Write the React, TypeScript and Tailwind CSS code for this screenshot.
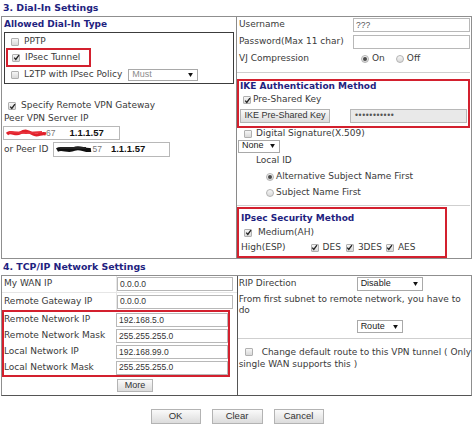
import React from "react";

const F = "font-['DejaVu_Sans',sans-serif]";
const A = "font-['Liberation_Sans',Arial,sans-serif]";

function Cb({ on }: { on?: boolean }) {
  return (
    <span className="inline-flex shrink-0 items-center justify-center w-[8px] h-[8px] border border-[#b0b0b0] rounded-[1px] bg-gradient-to-b from-[#f6f6f6] to-[#d9d9d9] overflow-visible">
      {on && (
        <svg viewBox="0 0 8 8" className="w-[7px] h-[7px] overflow-visible">
          <path d="M1.4 4.2 L3.2 6.2 L6.8 1.2" fill="none" stroke="#222" strokeWidth="1.5" />
        </svg>
      )}
    </span>
  );
}

function Radio({ on }: { on?: boolean }) {
  return (
    <span className="inline-flex shrink-0 items-center justify-center w-[8px] h-[8px] rounded-full border border-[#b3b3b3] bg-gradient-to-b from-[#f6f6f6] to-[#d9d9d9]">
      {on && <span className="w-[4px] h-[4px] rounded-full bg-[#4a4a4a]" />}
    </span>
  );
}

function Sel({ text, gray, cls }: { text: string; gray?: boolean; cls: string }) {
  return (
    <div className={`flex items-center justify-between border border-[#a9a9a9] bg-white pl-[3px] pr-[4px] ${A} text-[9px] ${cls}`}>
      <span className={gray ? "text-[#8c8c8c]" : "text-[#222]"}>{text}</span>
      <svg viewBox="0 0 6 5" className="w-[5px] h-[4px]">
        <path d="M0 0 H6 L3 5Z" fill="#111" />
      </svg>
    </div>
  );
}

function Inp({ cls, children }: { cls: string; children?: React.ReactNode }) {
  return (
    <div className={`flex items-center border border-[#b8b8b8] pl-[2px] ${A} text-[8.5px] text-[#333] whitespace-nowrap overflow-hidden ${cls}`}>
      {children}
    </div>
  );
}

function Btn({ cls, children }: { cls: string; children: React.ReactNode }) {
  return (
    <div className={`flex items-center justify-center border border-[#b3b3b3] bg-gradient-to-b from-[#fafafa] to-[#dcdcdc] ${A} text-[#333] ${cls}`}>
      {children}
    </div>
  );
}

const navy = "text-[#1f2380]";

export default function App() {
  return (
    <div className={`w-[474px] h-[428px] bg-white overflow-hidden ${F} text-[9px] text-[#3a3a3a]`}>
      {/* Section 3 header */}
      <div className={`h-[16px] pl-[3px] flex items-center font-bold text-[9.4px] ${navy}`}>3. Dial-In Settings</div>

      {/* Table 1 */}
      <div className="ml-[1px] w-[471px] h-[243px] border border-[#8f8f8f] flex">
        {/* Left column */}
        <div className="w-[234px] flex flex-col">
          <div className={`mt-[2px] h-[11px] pl-[2px] flex items-center font-bold ${navy}`}>Allowed Dial-In Type</div>
          <div className="mt-[2px] ml-[2px] w-[230px] h-[52px] border border-[#3c3c3c] pt-[3px] flex flex-col">
            <div className="h-[12px] pl-[6px] flex items-center gap-[5px]">
              <Cb />
              <span>PPTP</span>
            </div>
            <div className="ml-[1px] w-[85px] h-[19px] border-2 border-[#d3202e] pl-[4px] flex items-center gap-[5px]">
              <Cb on />
              <span>IPsec Tunnel</span>
            </div>
            <div className="h-[15px] pl-[6px] flex items-center gap-[5px]">
              <Cb />
              <span>L2TP with IPsec Policy</span>
              <Sel text="Must" gray cls="ml-[1px] w-[70px] h-[12px]" />
            </div>
          </div>
          <div className="mt-[15px] h-[14px] pl-[6px] flex items-center gap-[5px]">
            <Cb on />
            <span>Specify Remote VPN Gateway</span>
          </div>
          <div className="h-[12px] pl-[2px] flex items-center">Peer VPN Server IP</div>
          <Inp cls="mt-[1px] ml-[1px] w-[117px] h-[14px]">
            <svg viewBox="0 0 40 10" className="w-[40px] h-[10px]">
              <path d="M1 6 C5 2, 9 8, 14 5 S 22 3, 27 6 S 35 4, 40 6" fill="none" stroke="#e0202a" strokeWidth="3.2" />
              <path d="M3 4 L20 5 L36 4" fill="none" stroke="#e8303a" strokeWidth="2" />
            </svg>
            <span className="text-[#777]">67</span>
            <span className="ml-[14px] font-bold text-[9.5px] text-[#111]">1.1.1.57</span>
          </Inp>
          <div className="mt-[2px] h-[15px] pl-[2px] flex items-center gap-[5px]">
            <span>or Peer ID</span>
            <Inp cls="w-[117px] h-[15px]">
              <svg viewBox="0 0 36 10" className="w-[36px] h-[10px]">
                <path d="M1 5 C6 2, 12 7, 18 4 S 28 6, 35 5" fill="none" stroke="#111" strokeWidth="4" />
                <path d="M4 3 L30 3" fill="none" stroke="#222" strokeWidth="2" />
              </svg>
              <span className="text-[#777]">57</span>
              <span className="ml-[9px] font-bold text-[9.5px] text-[#111]">1.1.1.57</span>
            </Inp>
          </div>
        </div>

        {/* Right column */}
        <div className="w-[234px] border-l border-[#8a8a8a] flex flex-col">
          <div className="h-[16px] flex items-center">
            <span className="w-[116px] pl-[2px]">Username</span>
            <Inp cls="w-[117px] h-[14px] text-[#555]">???</Inp>
          </div>
          <div className="h-[17px] flex items-center">
            <span className="w-[116px] pl-[2px]">Password(Max 11 char)</span>
            <Inp cls="w-[117px] h-[14px]" />
          </div>
          <div className="h-[17px] flex items-center">
            <span className="w-[116px] pl-[2px]">VJ Compression</span>
            <div className="pl-[8px] flex items-center gap-[3px]">
              <Radio on />
              <span>On</span>
              <span className="ml-[5px]" />
              <Radio />
              <span>Off</span>
            </div>
          </div>
          <div className="mt-[5px] h-px bg-[#cfcfcf]" />
          <div className="mt-[6px] h-[49px] border-2 border-[#d3202e] flex flex-col">
            <div className={`h-[11px] pl-[1px] flex items-center font-bold ${navy}`}>IKE Authentication Method</div>
            <div className="h-[16px] pl-[4px] flex items-center gap-[2px]">
              <Cb on />
              <span>Pre-Shared Key</span>
            </div>
            <div className="h-[15px] flex items-center">
              <Btn cls="ml-[1px] w-[90px] h-[14px] text-[9px]">IKE Pre-Shared Key</Btn>
              <Inp cls="ml-auto mr-[1px] w-[117px] h-[14px] bg-[#e9e9e9] text-[4px] text-[#555] tracking-[0.6px] pl-[4px]">•••••••••••</Inp>
            </div>
          </div>
          <div className="h-[11px] pl-[7px] flex items-center gap-[4px]">
            <Cb />
            <span>Digital Signature(X.509)</span>
          </div>
          <div className="h-[14px] pl-[1px] flex items-center">
            <Sel text="None" cls="w-[42px] h-[13px]" />
          </div>
          <div className="h-[16px] pl-[19px] flex items-center">Local ID</div>
          <div className="h-[16px] pl-[29px] flex items-center gap-[2px]">
            <Radio on />
            <span>Alternative Subject Name First</span>
          </div>
          <div className="h-[16px] pl-[29px] flex items-center gap-[2px]">
            <Radio />
            <span>Subject Name First</span>
          </div>
          <div className="mt-[4px] h-px bg-[#cfcfcf]" />
          <div className="mt-[1px] w-[210px] h-[51px] border-2 border-[#d3202e] pt-[4px] flex flex-col">
            <div className={`h-[11px] pl-[2px] flex items-center font-bold ${navy}`}>IPsec Security Method</div>
            <div className="h-[17px] pl-[5px] flex items-center gap-[6px]">
              <Cb on />
              <span>Medium(AH)</span>
            </div>
            <div className="h-[13px] pl-[2px] flex items-center">
              <span>High(ESP)</span>
              <span className="ml-[25px]" />
              <Cb on />
              <span className="ml-[4px]">DES</span>
              <span className="ml-[5px]" />
              <Cb on />
              <span className="ml-[4px]">3DES</span>
              <span className="ml-[4px]" />
              <Cb on />
              <span className="ml-[4px]">AES</span>
            </div>
          </div>
        </div>
      </div>

      {/* Section 4 header */}
      <div className={`h-[16px] pl-[3px] flex items-center font-bold text-[9.4px] ${navy}`}>4. TCP/IP Network Settings</div>

      {/* Table 2 */}
      <div className="ml-[1px] w-[471px] h-[121px] border border-[#8f8f8f] border-b-[#555] flex">
        <div className="w-[235px] flex flex-col">
          <div className="h-[17px] flex items-center border-b border-[#e6e6e6]">
            <span className="w-[115px] pl-[2px] self-stretch flex items-center border-r border-[#e6e6e6]">My WAN IP</span>
            <Inp cls="w-[116px] h-[14px]">0.0.0.0</Inp>
          </div>
          <div className="h-[17px] flex items-center">
            <span className="w-[115px] pl-[2px] self-stretch flex items-center border-r border-[#e6e6e6]">Remote Gateway IP</span>
            <Inp cls="w-[116px] h-[14px]">0.0.0.0</Inp>
          </div>
          <div className="w-[228px] h-[67px] border-2 border-[#d3202e] flex flex-col">
            <div className="h-[16px] flex items-center">
              <span className="w-[113px]">Remote Network IP</span>
              <Inp cls="w-[113px] h-[14px]">192.168.5.0</Inp>
            </div>
            <div className="h-[16px] flex items-center">
              <span className="w-[113px]">Remote Network Mask</span>
              <Inp cls="w-[113px] h-[14px]">255.255.255.0</Inp>
            </div>
            <div className="h-[16px] flex items-center">
              <span className="w-[113px]">Local Network IP</span>
              <Inp cls="w-[113px] h-[14px]">192.168.99.0</Inp>
            </div>
            <div className="h-[15px] flex items-center">
              <span className="w-[113px]">Local Network Mask</span>
              <Inp cls="w-[113px] h-[14px]">255.255.255.0</Inp>
            </div>
          </div>
          <Btn cls="mt-[2px] ml-[115px] w-[36px] h-[13px] text-[9px]">More</Btn>
        </div>
        <div className="flex-1 border-l border-[#555] flex flex-col">
          <div className="h-[15px] flex items-center">
            <span className="w-[119px] pl-[1px]">RIP Direction</span>
            <Sel text="Disable" cls="w-[66px] h-[14px]" />
          </div>
          <div className="mt-[3px] pl-[1px] leading-[11px] whitespace-nowrap">
            From first subnet to remote network, you have to
            <br />
            do
          </div>
          <Sel text="Route" cls="mt-[4px] ml-[119px] w-[46px] h-[13px]" />
          <div className="mt-[5px] h-px bg-[#cfcfcf]" />
          <div className="mt-[7px] pl-[1px] leading-[12px] whitespace-nowrap">
            <span className="inline-flex align-middle ml-[6px] mr-[9px] -mt-[2px]">
              <Cb />
            </span>
            Change default route to this VPN tunnel ( Only
            <br />
            single WAN supports this )
          </div>
        </div>
      </div>

      {/* Buttons */}
      <div className="mt-[13px] flex justify-center gap-[11px]">
        <Btn cls="w-[50px] h-[15px] text-[9.5px]">OK</Btn>
        <Btn cls="w-[51px] h-[15px] text-[9.5px]">Clear</Btn>
        <Btn cls="w-[50px] h-[15px] text-[9.5px]">Cancel</Btn>
      </div>
    </div>
  );
}
